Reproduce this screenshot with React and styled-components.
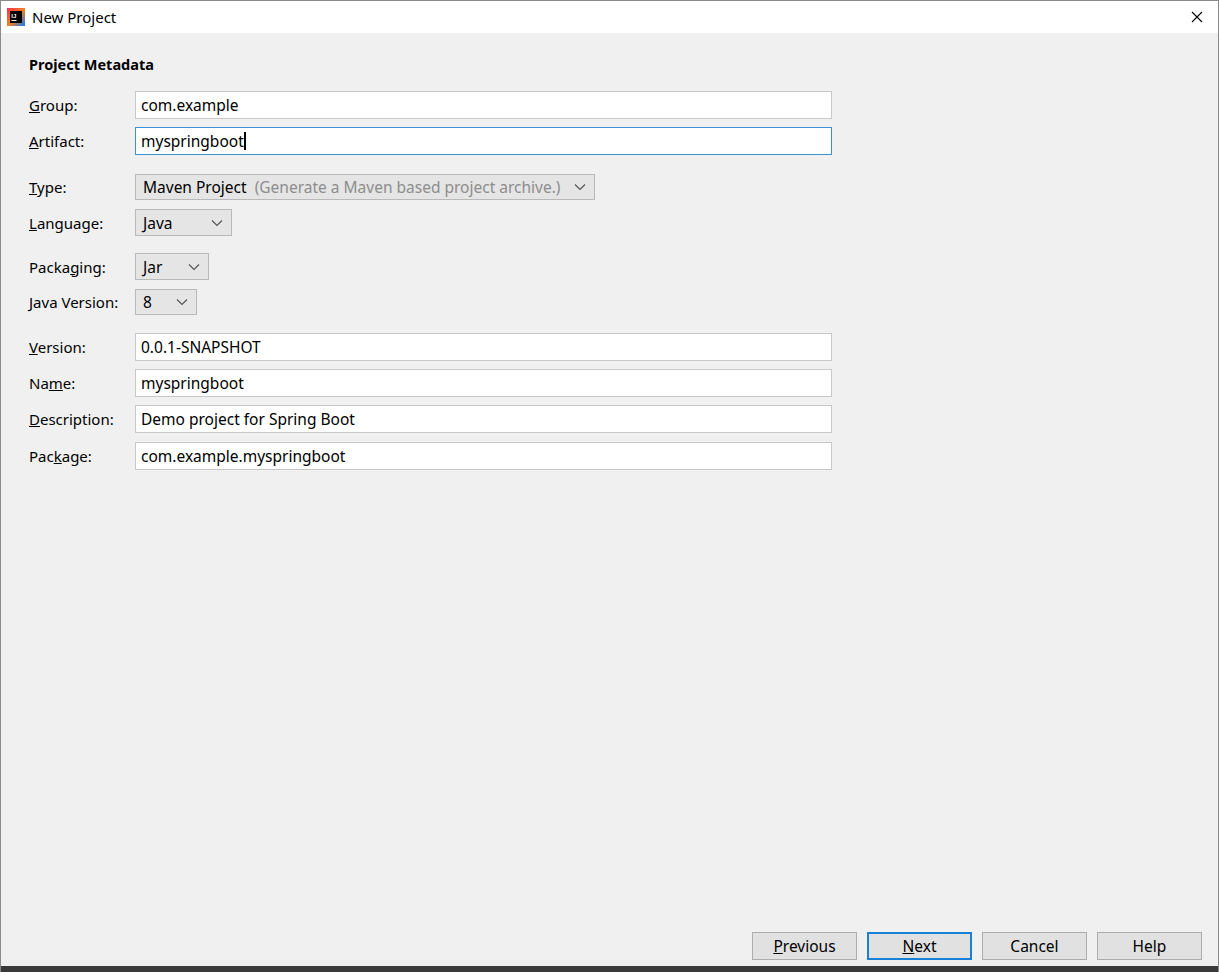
import React from "react";
import styled, { createGlobalStyle } from "styled-components";

const G = createGlobalStyle`
  html,body{margin:0;padding:0;background:#f0f0f0;}
  body{font-family:"Noto Sans","Open Sans",sans-serif;font-size:15px;color:#000;}
`;
const Win = styled.div`width:1219px;height:972px;box-sizing:border-box;border:1px solid #8a8a8a;border-bottom:none;display:flex;flex-direction:column;background:#f0f0f0;`;
const Title = styled.div`height:32px;background:#fff;display:flex;align-items:center;padding:0 6px;gap:7px;font-size:15px;`;
const Close = styled.div`margin-left:auto;width:30px;display:flex;justify-content:center;`;
const Body = styled.div`flex:1;padding:21px 0 0 28px;display:flex;flex-direction:column;`;
const H = styled.div`font-weight:bold;font-size:14.5px;margin-bottom:17px;`;
const Row = styled.div`display:flex;align-items:center;height:${p=>p.h||28}px;margin-top:${p=>p.mt||0}px;`;
const Label = styled.div`width:106px;font-size:15px;u{text-decoration:underline;}`;
const Input = styled.div`width:697px;height:28px;box-sizing:border-box;background:#fff;border:1px solid ${p=>p.focus?"#3d8fd6":"#c8c8c8"};display:flex;align-items:center;padding-left:5px;font-size:15.5px;`;
const Caret = styled.span`display:inline-block;width:2px;height:18px;background:#000;`;
const Select = styled.div`width:${p=>p.w}px;height:${p=>p.h||26}px;box-sizing:border-box;background:#e5e5e5;border:1px solid #b9b9b9;display:flex;align-items:center;padding:0 8px 0 7px;font-size:15.5px;gap:4px;`;
const Hint = styled.span`color:#8d8d8d;`;
const Chev = () => <svg width="12" height="8" viewBox="0 0 12 8" style={{marginLeft:"auto"}}><path d="M1 1.5l5 5 5-5" fill="none" stroke="#555" strokeWidth="1.2"/></svg>;
const Footer = styled.div`display:flex;justify-content:flex-end;gap:10px;padding:0 16px 6px 0;`;
const Btn = styled.div`width:105px;height:28px;box-sizing:border-box;background:#e1e1e1;border:${p=>p.def?"2px solid #1a7fd6":"1px solid #adadad"};display:flex;align-items:center;justify-content:center;font-size:15.5px;u{text-decoration:underline;}`;
const Bottom = styled.div`height:6px;background:#3a3a3a;`;

const sel = (label, w, val, hint, mt, h) => (
  <Row mt={mt} h={h}><Label>{label}</Label><Select w={w} h={h}>{val}{hint && <Hint>&nbsp;{hint}</Hint>}<Chev/></Select></Row>
);

export default function App(){
  return <><G/><Win>
    <Title>
      <svg width="18" height="18" viewBox="0 0 18 18"><defs><linearGradient id="g" x1="0" y1="0" x2="1" y2="1"><stop offset="0" stopColor="#fe2857"/><stop offset=".5" stopColor="#fc801d"/><stop offset="1" stopColor="#087cfa"/></linearGradient></defs><rect width="18" height="18" fill="url(#g)"/><rect x="3" y="3" width="12" height="12" fill="#000"/><text x="4.3" y="10" fontSize="6" fill="#fff" fontFamily="Liberation Sans" fontWeight="bold">IJ</text><rect x="4.5" y="12" width="5" height="1" fill="#fff"/></svg>
      New Project
      <Close><svg width="12" height="12" viewBox="0 0 12 12"><path d="M1 1l10 10M11 1L1 11" stroke="#000" strokeWidth="1.1"/></svg></Close>
    </Title>
    <Body>
      <H>Project Metadata</H>
      <Row><Label><u>G</u>roup:</Label><Input>com.example</Input></Row>
      <Row mt={8}><Label><u>A</u>rtifact:</Label><Input focus>myspringboot<Caret/></Input></Row>
      {sel(<><u>T</u>ype:</>,460,"Maven Project","(Generate a Maven based project archive.)",19,26)}
      {sel(<><u>L</u>anguage:</>,97,"Java",null,9,27)}
      {sel(<>Packa<u>g</u>ing:</>,74,"Jar",null,17,27)}
      {sel(<><u>J</u>ava Version:</>,62,"8",null,9,26)}
      <Row mt={18}><Label><u>V</u>ersion:</Label><Input>0.0.1-SNAPSHOT</Input></Row>
      <Row mt={8}><Label>Na<u>m</u>e:</Label><Input>myspringboot</Input></Row>
      <Row mt={8}><Label><u>D</u>escription:</Label><Input>Demo project for Spring Boot</Input></Row>
      <Row mt={9}><Label>Pac<u>k</u>age:</Label><Input>com.example.myspringboot</Input></Row>
    </Body>
    <Footer>
      <Btn><span><u>P</u>revious</span></Btn>
      <Btn def><span><u>N</u>ext</span></Btn>
      <Btn>Cancel</Btn>
      <Btn>Help</Btn>
    </Footer>
    <Bottom/>
  </Win></>;
}
